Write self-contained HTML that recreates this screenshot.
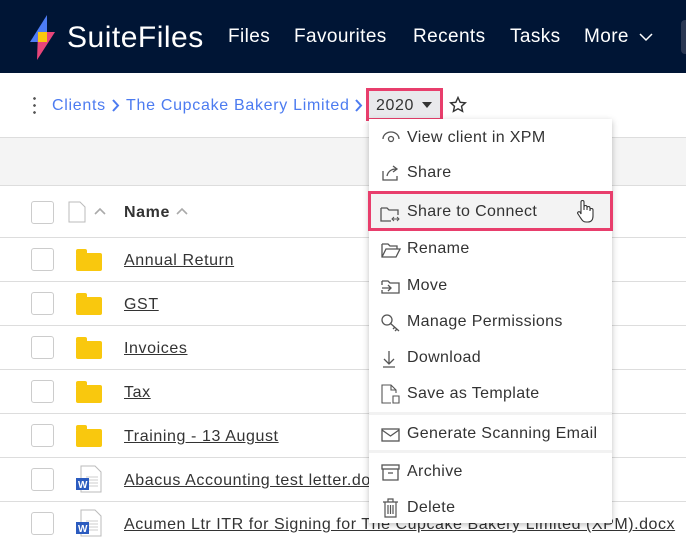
<!DOCTYPE html>
<html><head><meta charset="utf-8"><style>
*{box-sizing:border-box;margin:0;padding:0}
body{width:686px;height:545px;overflow:hidden;background:#fff;font-family:"Liberation Sans",sans-serif;color:#333;position:relative;font-size:16px;letter-spacing:0.6px}
.hdr{position:absolute;left:0;top:0;width:686px;height:73px;background:#001535}
.hdr .t{position:absolute;color:#fff;top:26px;font-size:19px;letter-spacing:0.4px}
.abs{position:absolute}
a{color:#4c7bf0}
.gray{position:absolute;left:0;top:137px;width:686px;height:49px;background:#f4f4f4;border-top:1px solid #ddd;border-bottom:1px solid #ddd}
.cb{position:absolute;left:31px;width:23px;height:23px;border:1px solid #ccc;border-radius:3px;background:#fff}
.row{position:absolute;left:0;width:686px;height:44px;border-top:1px solid #ddd}
.row .cb{top:10px}
.row .n{position:absolute;left:124px;top:14px;text-decoration:underline;color:#333;white-space:nowrap}
.fold{position:absolute;left:76px;top:15px;width:26px;height:18px;background:#f9c80e;border-radius:2px}
.fold:before{content:"";position:absolute;left:0;top:-4px;width:11px;height:5px;background:#f9c80e;border-radius:2px 2px 0 0}
.menu{position:absolute;left:369px;top:119px;width:243px;height:404px;background:#fff;box-shadow:0 2px 6px rgba(0,0,0,.25)}
.mi{position:absolute;left:0;width:243px;height:36px}
.mi span{position:absolute;left:38px;top:10px;color:#333;white-space:nowrap;letter-spacing:0.35px}
.mi svg{position:absolute;left:12px;top:10px}
.sep{position:absolute;left:0;width:243px;height:3px;background:#f2f2f2}
</style></head><body>
<div class="hdr">
<svg class="abs" style="left:28px;top:13px" width="30" height="48"><polygon points="19,2 2,29 19,29" fill="#4d7cf4"/><polygon points="10,19 27,19 9,47" fill="#e8457a"/><rect x="10" y="19" width="9" height="10" fill="#f9c80e"/></svg>
<div class="t" style="left:67px;top:21px;font-size:30px;letter-spacing:0.5px">SuiteFiles</div>
<div class="t" style="left:228px">Files</div>
<div class="t" style="left:294px">Favourites</div>
<div class="t" style="left:413px">Recents</div>
<div class="t" style="left:510px">Tasks</div>
<div class="t" style="left:584px">More</div>
<svg class="abs" style="left:639px;top:33px" width="14" height="9"><path d="M1 1l6 6 6-6" stroke="#fff" fill="none" stroke-width="1.5"/></svg>
<div class="abs" style="left:681px;top:20px;width:10px;height:34px;background:#2a3752;border-radius:4px"></div>
</div>
<div class="abs" style="left:33px;top:95px;width:3px;height:20px;background:radial-gradient(circle,#555 1.2px,transparent 1.5px) 0 0/3px 7px"></div>
<a class="abs" style="left:52px;top:97px;letter-spacing:0.7px">Clients</a>
<svg class="abs" style="left:111px;top:99px" width="9" height="13"><path d="M2 1l5 5.5L2 12" stroke="#4c7bf0" stroke-width="2" fill="none"/></svg>
<a class="abs" style="left:126px;top:97px;letter-spacing:0.7px;white-space:nowrap">The Cupcake Bakery Limited</a>
<svg class="abs" style="left:354px;top:99px" width="9" height="13"><path d="M2 1l5 5.5L2 12" stroke="#4c7bf0" stroke-width="2" fill="none"/></svg>
<div class="abs" style="left:366px;top:88px;width:77px;height:33px;border:3px solid #e83e6c;background:#e9e9ec"></div>
<div class="abs" style="left:376px;top:97px;color:#333">2020</div>
<svg class="abs" style="left:422px;top:102px" width="10" height="6"><path d="M0 0h10L5 6z" fill="#333"/></svg>
<svg class="abs" style="left:449px;top:96px" width="18" height="17"><path d="M9 1.5l2.2 4.8 5.2.5-3.9 3.5 1.1 5.1L9 12.8 4.4 15.4l1.1-5.1L1.6 6.8l5.2-.5z" fill="none" stroke="#333" stroke-width="1.4"/></svg>
<div class="gray"></div>
<div class="cb" style="top:201px"></div>
<svg class="abs" style="left:68px;top:201px" width="18" height="22"><path d="M1 1h11l5 5v15H1z" fill="#fff" stroke="#bbb"/></svg>
<svg class="abs" style="left:94px;top:207px" width="12" height="8"><path d="M1 7l5-5 5 5" stroke="#aaa" stroke-width="1.6" fill="none"/></svg>
<div class="abs" style="left:124px;top:204px;font-weight:bold;color:#333">Name</div>
<svg class="abs" style="left:176px;top:207px" width="12" height="8"><path d="M1 7l5-5 5 5" stroke="#aaa" stroke-width="1.6" fill="none"/></svg>
<div class="row" style="top:237px"><div class="cb"></div><div class="fold"></div><div class="n">Annual Return</div></div>
<div class="row" style="top:281px"><div class="cb"></div><div class="fold"></div><div class="n">GST</div></div>
<div class="row" style="top:325px"><div class="cb"></div><div class="fold"></div><div class="n">Invoices</div></div>
<div class="row" style="top:369px"><div class="cb"></div><div class="fold"></div><div class="n">Tax</div></div>
<div class="row" style="top:413px"><div class="cb"></div><div class="fold"></div><div class="n">Training - 13 August</div></div>
<div class="row" style="top:457px"><div class="cb"></div><svg class="abs" style="left:75px;top:7px" width="28" height="28"><path d="M6 1h14l6 6v20H6z" fill="#fff" stroke="#bbb"/><path d="M11 12h12M11 15h12M11 18h12M11 21h12" stroke="#ccc"/><rect x="1" y="13" width="13" height="12" fill="#2b5bbf"/><text x="3" y="23" font-size="10" fill="#fff" font-weight="bold" font-family="Liberation Sans">W</text></svg><div class="n">Abacus Accounting test letter.docx</div></div>
<div class="row" style="top:501px"><div class="cb"></div><svg class="abs" style="left:75px;top:7px" width="28" height="28"><path d="M6 1h14l6 6v20H6z" fill="#fff" stroke="#bbb"/><path d="M11 12h12M11 15h12M11 18h12M11 21h12" stroke="#ccc"/><rect x="1" y="13" width="13" height="12" fill="#2b5bbf"/><text x="3" y="23" font-size="10" fill="#fff" font-weight="bold" font-family="Liberation Sans">W</text></svg><div class="n" style="letter-spacing:0.55px">Acumen Ltr ITR for Signing for The Cupcake Bakery Limited (XPM).docx</div></div>
<div class="menu">
<div class="mi" style="top:0"><svg width="20" height="16"><path d="M2 10a8 7 0 0 1 16 0" stroke="#555" fill="none" stroke-width="1.3"/><circle cx="10" cy="10" r="2.5" stroke="#555" fill="none" stroke-width="1.3"/></svg><span>View client in XPM</span></div>
<div class="mi" style="top:35px"><svg width="20" height="18"><path d="M2 7v9h14v-4M6 12c1-5 5-7 9-7M12 2l4 3-4 3" stroke="#555" fill="none" stroke-width="1.3"/></svg><span>Share</span></div>
<div class="mi" style="top:72px;height:40px;border:3px solid #e83e6c;background:#f3f3f3;left:-1px;width:245px"><svg width="20" height="18" style="top:11px;left:9px"><path d="M1 3h6l2 2h9v5M1 3v13h10" stroke="#555" fill="none" stroke-width="1.3"/><path d="M12 14h7M14 12l-2 2 2 2M17 12l2 2-2 2" stroke="#555" fill="none"/></svg><span style="top:9px;left:36px">Share to Connect</span>
<svg width="20" height="26" style="left:204px;top:5px"><path d="M6 15V3a1.5 1.5 0 0 1 3 0v8V8a1.5 1.5 0 0 1 3 0v3-2a1.5 1.5 0 0 1 3 0v3-1a1.5 1.5 0 0 1 3 0v6c0 4-2 6-5 6h-2c-3 0-4-2-6-5l-2-3c-1-1 0-3 2-2z" fill="#fff" stroke="#333" stroke-width="1.1"/></svg></div>
<div class="mi" style="top:111px"><svg width="20" height="16" style="top:12px"><path d="M1 2h6l2 2h7v3M1 2v13h14l4-8H5L1 15" stroke="#555" fill="none" stroke-width="1.3"/></svg><span>Rename</span></div>
<div class="mi" style="top:148px"><svg width="20" height="16" style="top:12px"><path d="M1 2h6l2 2h9v10H1v-3M1 2v4M1 9h9M7 6l3 3-3 3" stroke="#555" fill="none" stroke-width="1.3"/></svg><span>Move</span></div>
<div class="mi" style="top:184px"><svg width="20" height="18" style="top:11px"><circle cx="6" cy="6" r="5" stroke="#555" fill="none" stroke-width="1.3"/><path d="M9 9l9 8M14 13l-2 2M16 15l-2 2" stroke="#555" fill="none" stroke-width="1.3"/></svg><span>Manage Permissions</span></div>
<div class="mi" style="top:220px"><svg width="20" height="18" style="top:11px"><path d="M8 1v13M3 9l5 5 5-5M2 17h12" stroke="#555" fill="none" stroke-width="1.3"/></svg><span>Download</span></div>
<div class="mi" style="top:256px"><svg width="20" height="20" style="top:9px"><path d="M10 19H1V1h9l5 5v3M10 1v5h5M12 12v7h6v-7z" stroke="#555" fill="none" stroke-width="1.1"/></svg><span>Save as Template</span></div>
<div class="sep" style="top:293px"></div>
<div class="mi" style="top:296px"><svg width="20" height="16" style="top:12px"><rect x="1" y="2" width="17" height="12" stroke="#555" fill="none" stroke-width="1.3"/><path d="M1 3l8.5 6L18 3" stroke="#555" fill="none" stroke-width="1.3"/></svg><span>Generate Scanning Email</span></div>
<div class="sep" style="top:331px"></div>
<div class="mi" style="top:334px"><svg width="20" height="18" style="top:11px"><rect x="1" y="1" width="17" height="4" stroke="#555" fill="none" stroke-width="1.3"/><path d="M2 5v11h15V5M7 9h5" stroke="#555" fill="none" stroke-width="1.3"/></svg><span>Archive</span></div>
<div class="mi" style="top:370px"><svg width="20" height="20" style="top:9px"><path d="M2 4h15M7 4V1h5v3M4 4v15h11V4M7 7v9M9.5 7v9M12 7v9" stroke="#555" fill="none" stroke-width="1.2"/></svg><span>Delete</span></div>
</div>
</body></html>
